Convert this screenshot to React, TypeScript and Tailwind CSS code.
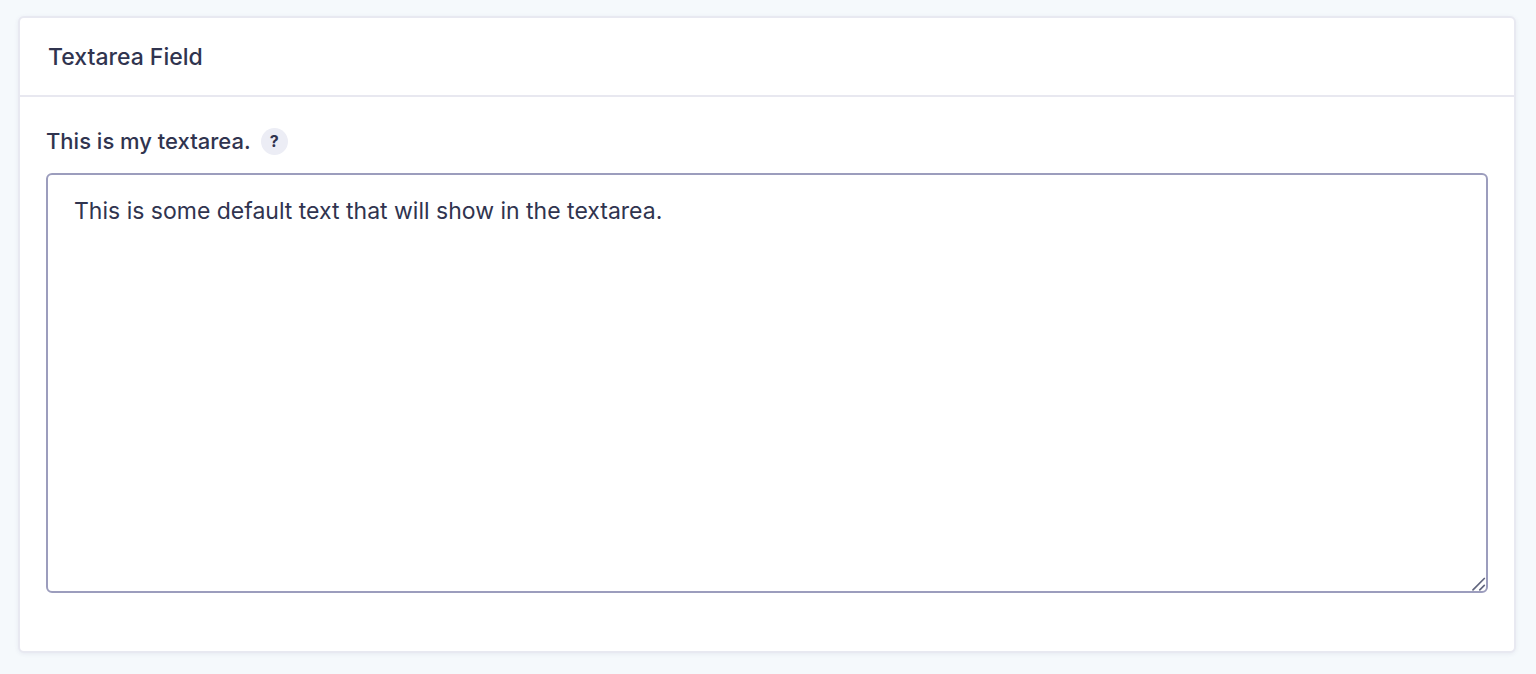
import React, { useState } from 'react';

const App: React.FC = () => {
  const [value, setValue] = useState('This is some default text that will show in the textarea.');

  return (
    <div className="min-h-screen bg-[#f5f9fc] px-[18px] pt-4 pb-5 font-['Inter',sans-serif] text-[#30344f]">
      {/* Card */}
      <section className="bg-white border-2 border-[#e8e9f1] rounded-md shadow-[0_1px_4px_rgba(60,60,120,0.08)] mr-0.5">
        <header className="px-7 pt-[25px] pb-6 border-b-2 border-[#e8e8f0]">
          <h1 className="text-[23px] leading-7 font-medium">Textarea Field</h1>
        </header>

        {/* Field */}
        <div className="px-[26px] pt-7 pb-[58px]">
          <div className="flex items-center gap-2.5 mb-4 h-8">
            <label htmlFor="textarea-field" className="text-[22px] leading-8 font-medium">
              This is my textarea.
            </label>
            <button
              type="button"
              aria-label="Help"
              className="flex items-center justify-center size-[27px] rounded-full bg-[#ecedf5] text-[16px] leading-5 font-bold"
            >
              ?
            </button>
          </div>
          <div className="relative">
            <textarea
              id="textarea-field"
              value={value}
              onChange={e => setValue(e.target.value)}
              className="block w-full h-[420px] px-[26px] py-5 border-2 border-[#9c9dbd] rounded-md bg-white text-[23px] leading-8 resize-none"
            />
            {/* Resize grip */}
            <svg
              className="absolute right-0.5 bottom-0.5 pointer-events-none"
              width="14"
              height="14"
              viewBox="0 0 14 14"
              fill="none"
              stroke="#62667f"
              strokeWidth="1.7"
              strokeLinecap="round"
            >
              <path d="M1 12.8 12.3 1.5M7.8 12.8 12.3 8.3" />
            </svg>
          </div>
        </div>
      </section>
    </div>
  );
};

export default App;
